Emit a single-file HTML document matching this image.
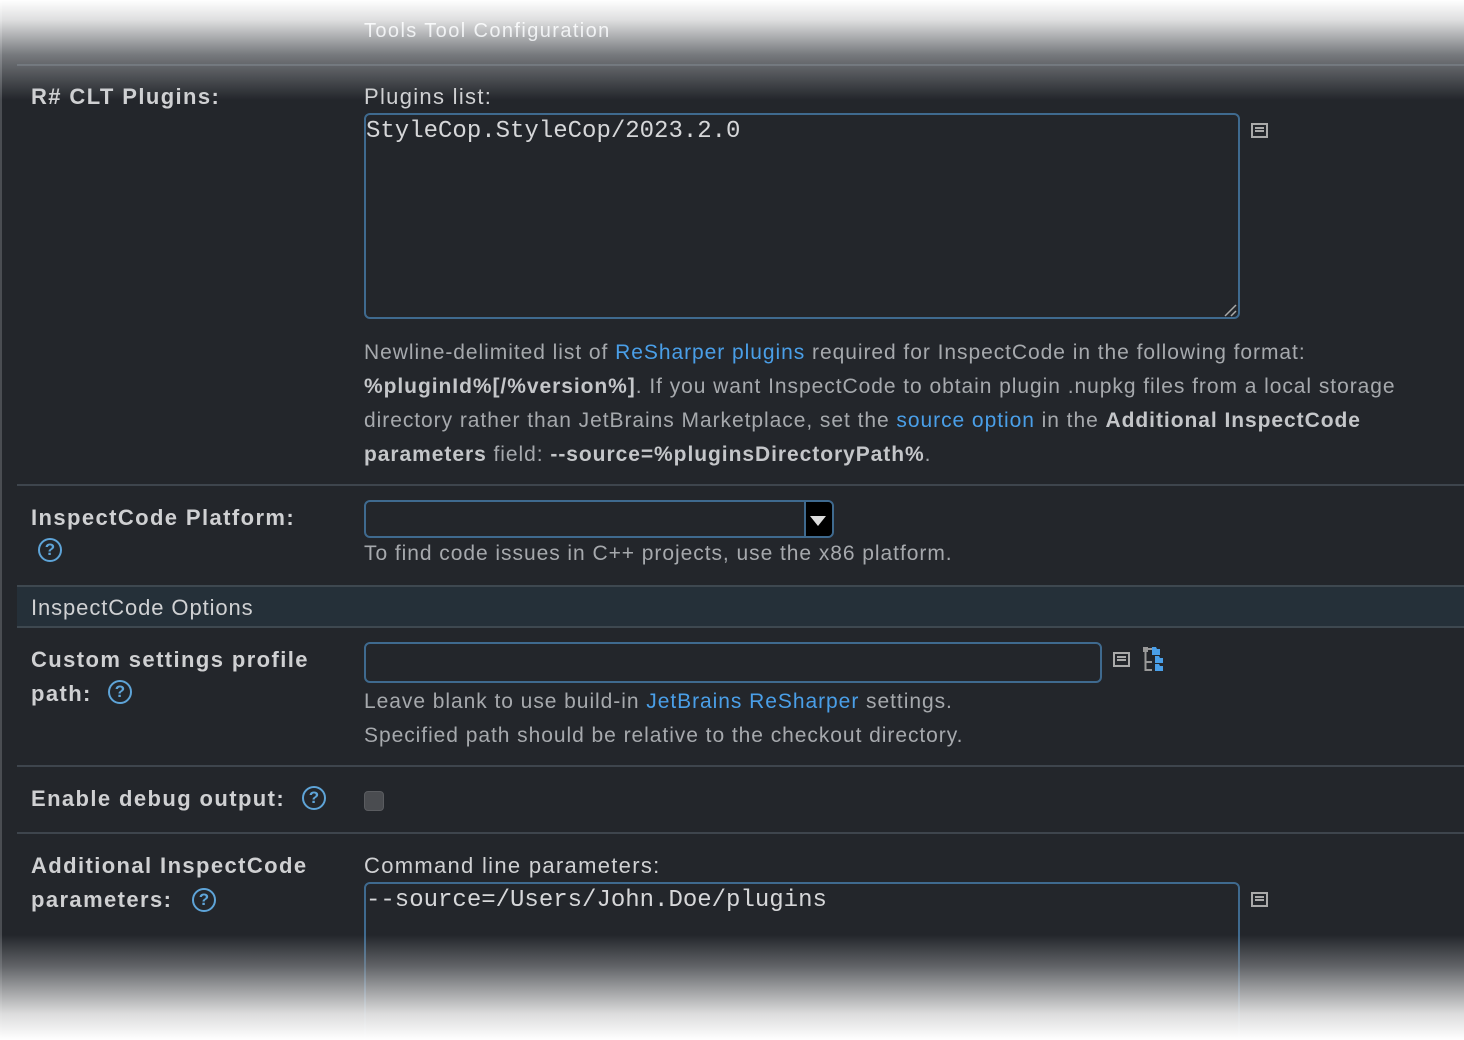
<!DOCTYPE html>
<html><head><meta charset="utf-8"><style>
*{margin:0;padding:0;box-sizing:border-box}
html,body{width:1464px;height:1040px;overflow:hidden}
body{background:#23262b;position:relative;font-family:"Liberation Sans",sans-serif;color:#a9acb0}
.a{position:absolute;white-space:nowrap}
.lbl{font-weight:bold;font-size:22px;color:#cfd0d2;letter-spacing:1.4px}
.t{font-size:21px;color:#a6a9ad;letter-spacing:0.95px}
.t b{color:#c4c6c9}
.lk{color:#4a9fe8}
.sep{position:absolute;left:17px;right:0;height:2px;background:#3e454d}
.box{position:absolute;border:2px solid #3f6a8f;border-radius:6px;background:#23262b}
.mono{font-family:"Liberation Mono",monospace;font-size:24px;color:#d6d7d9}
.q{position:absolute;width:24px;height:24px;border:2px solid #5ea4d8;border-radius:50%;color:#5ea4d8;font-size:17px;font-weight:bold;text-align:center;line-height:20px;letter-spacing:0}
.ic{position:absolute;width:17px;height:15px;border:2px solid #aaa;background:#23262b}
.ic:before{content:"";position:absolute;left:2px;right:2px;top:2px;height:7px;border-top:2px solid #aaa;border-bottom:2px solid #aaa}
.ic:after{content:"";position:absolute;left:2px;right:2px;top:5px;height:2px;background:#aaa}
.h{font-size:22px;color:#d0d1d3;letter-spacing:1.3px}
</style></head><body>
<div style="position:absolute;left:0;top:0;width:2px;height:1040px;background:#4a4d52"></div>
<div class="a" style="left:364px;top:20px;font-size:20px;color:#eef2f6;letter-spacing:1.4px">Tools Tool Configuration</div>
<div class="sep" style="top:64px"></div>

<div class="a lbl" style="left:31px;top:84px">R# CLT Plugins:</div>
<div class="a h" style="left:364px;top:84px">Plugins list:</div>
<div class="box" style="left:364px;top:113px;width:876px;height:206px"></div>
<div class="a mono" style="left:366px;top:118px">StyleCop.StyleCop/2023.2.0</div>
<svg class="a" style="left:1222px;top:302px" width="16" height="16"><path d="M3 14L14 3M9 14L14 9" stroke="#aaa" stroke-width="1.5"/></svg>
<div class="ic" style="left:1251px;top:123px"></div>
<div class="a t" style="left:364px;top:336px;line-height:34px">Newline-delimited list of <span class="lk">ReSharper plugins</span> required for InspectCode in the following format:<br><b>%pluginId%[/%version%]</b>. If you want InspectCode to obtain plugin .nupkg files from a local storage<br>directory rather than JetBrains Marketplace, set the <span class="lk">source option</span> in the <b>Additional InspectCode</b><br><b>parameters</b> field: <b>--source=%pluginsDirectoryPath%</b>.</div>
<div class="sep" style="top:484px"></div>

<div class="a lbl" style="left:31px;top:505px">InspectCode Platform:</div>
<div class="q" style="left:38px;top:538px">?</div>
<div class="box" style="left:364px;top:500px;width:470px;height:38px;overflow:hidden"><div style="position:absolute;right:0;top:0;width:28px;height:36px;background:#000;border-left:2px solid #3f6a8f"></div><svg style="position:absolute;right:6px;top:14px" width="16" height="10"><path d="M0 0H16L8 10Z" fill="#ddd"/></svg></div>
<div class="a t" style="left:364px;top:542px">To find code issues in C++ projects, use the x86 platform.</div>

<div style="position:absolute;left:17px;right:0;top:585px;height:43px;background:#253039;border-top:2px solid #3e4850;border-bottom:2px solid #3e4850"></div>
<div class="a h" style="left:31px;top:595px;letter-spacing:0.9px">InspectCode Options</div>

<div class="a lbl" style="left:31px;top:643px;line-height:34px">Custom settings profile<br>path:</div>
<div class="q" style="left:108px;top:680px">?</div>
<div class="box" style="left:364px;top:642px;width:738px;height:41px"></div>
<div class="ic" style="left:1113px;top:652px"></div>
<svg class="a" style="left:1142px;top:646px" width="26" height="26"><rect x="1" y="1" width="5" height="5" fill="#999"/><path d="M3.5 6V25M3.5 16H10M3.5 24H10M6 3H10" stroke="#999" stroke-width="2"/><path d="M10 1h4l1 2h3v6h-8z M13 10h4l1 2h3v5h-8z M13 18h4l1 2h3v5h-8z" fill="#4a9fe8"/></svg>
<div class="a t" style="left:364px;top:685px;line-height:34px">Leave blank to use build-in <span class="lk">JetBrains ReSharper</span> settings.<br>Specified path should be relative to the checkout directory.</div>
<div class="sep" style="top:765px"></div>

<div class="a lbl" style="left:31px;top:786px">Enable debug output:</div>
<div class="q" style="left:302px;top:786px">?</div>
<div style="position:absolute;left:364px;top:791px;width:20px;height:20px;border-radius:4px;background:#4a4c50;border:1px solid #5a5c60"></div>
<div class="sep" style="top:832px"></div>

<div class="a lbl" style="left:31px;top:849px;line-height:34px">Additional InspectCode<br>parameters:</div>
<div class="q" style="left:192px;top:888px">?</div>
<div class="a h" style="left:364px;top:853px">Command line parameters:</div>
<div class="box" style="left:364px;top:882px;width:876px;height:180px"></div>
<div class="a mono" style="left:366px;top:887px">--source=/Users/John.Doe/plugins</div>
<div class="ic" style="left:1251px;top:892px"></div>

<div style="position:absolute;left:0;top:0;width:1464px;height:100px;background:linear-gradient(#fff 0%,rgba(255,255,255,.85) 20%,rgba(200,202,205,.5) 55%,rgba(35,38,43,0) 100%)"></div>
<div style="position:absolute;left:0;top:935px;width:1464px;height:105px;background:linear-gradient(rgba(35,38,43,0) 0%,rgba(140,142,145,.6) 30%,rgba(230,230,230,.95) 75%,#fff 100%)"></div>
</body></html>
